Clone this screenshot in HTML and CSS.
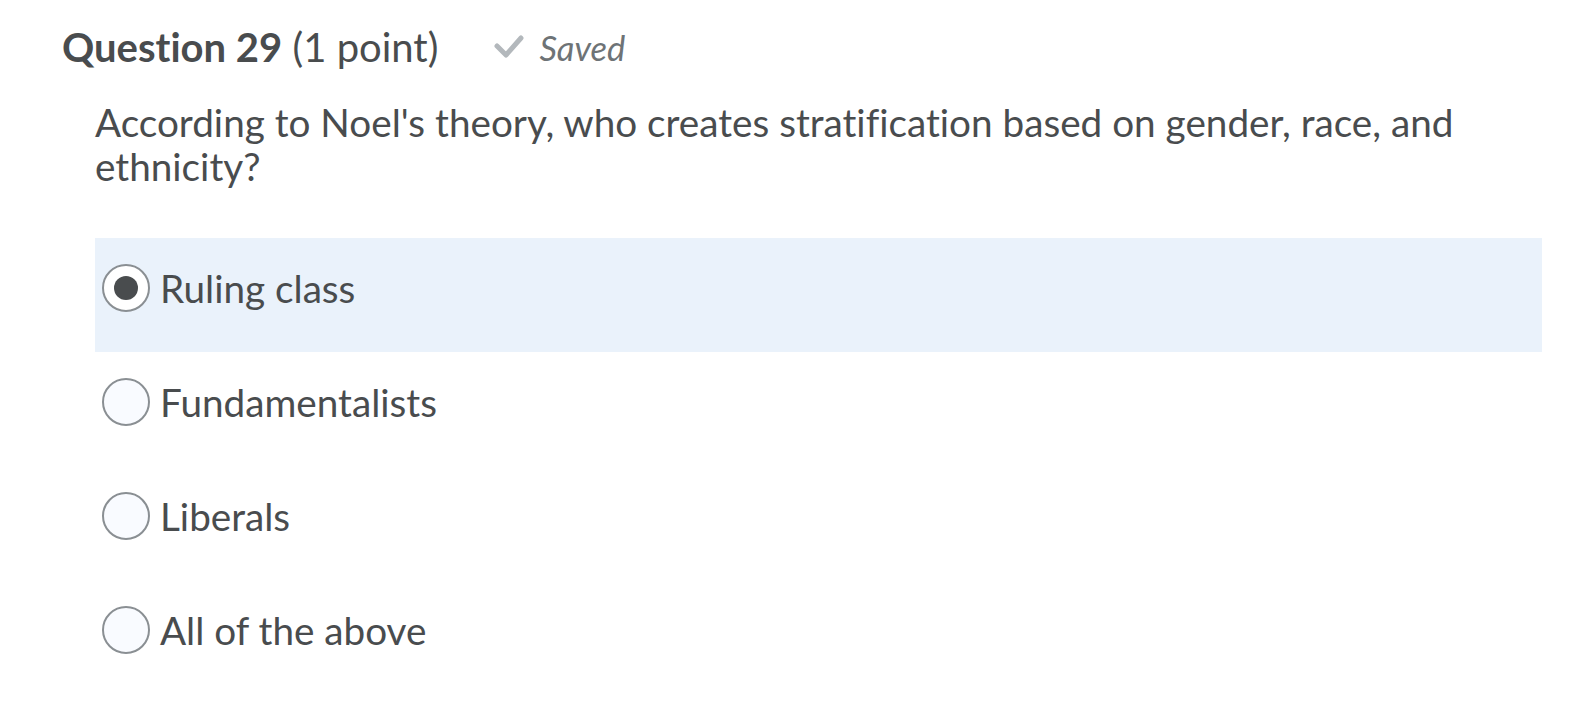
FILE: index.html
```html
<!DOCTYPE html>
<html>
<head>
<meta charset="utf-8">
<link rel="stylesheet" href="styles.css">
</head>
<body>
<div class="page">
  <div class="header">
    <h2 class="title"><strong>Question 29</strong> (1 point)</h2>
    <div class="saved">
      <svg class="check" width="32" height="26" viewBox="0 0 32 26"><path d="M5 13 L14 22 L29 5" fill="none" stroke="#b3b8bc" stroke-width="5" stroke-linecap="round" stroke-linejoin="round"/></svg>
      <span>Saved</span>
    </div>
  </div>
  <div class="body">
    <p class="question">According to Noel's theory, who creates stratification based on gender, race, and ethnicity?</p>
    <div class="options">
      <label class="option selected"><span class="radio"><span class="dot"></span></span><span class="label">Ruling class</span></label>
      <label class="option"><span class="radio"></span><span class="label">Fundamentalists</span></label>
      <label class="option"><span class="radio"></span><span class="label">Liberals</span></label>
      <label class="option"><span class="radio"></span><span class="label">All of the above</span></label>
    </div>
  </div>
</div>
</body>
</html>
```
FILE: styles.css
```css
html, body {
  margin: 0;
  padding: 0;
  background: #ffffff;
}
body {
  font-family: Lato, "Open Sans", sans-serif;
  color: #494c4e;
  font-variant-ligatures: none;
  font-feature-settings: "liga" 0, "clig" 0;
}
.page {
  padding: 23px 42px 0 62px;
}
.header {
  display: flex;
  align-items: center;
  gap: 54px;
  height: 48px;
}
.title {
  margin: 0;
  font-size: 40px;
  font-weight: 400;
  line-height: 48px;
}
.title strong {
  font-weight: 700;
}
.saved {
  display: flex;
  align-items: center;
  gap: 15px;
  font-style: italic;
  font-size: 34.5px;
  color: #6e7376;
}
.check {
  margin-top: -2px;
}
.body {
  padding-left: 33px;
  padding-right: 0;
  margin-right: -8px;
}
.question {
  margin: 29px 0 0 0;
  font-size: 38.7px;
  line-height: 44px;
}
.options {
  margin-top: 50px;
  display: flex;
  flex-direction: column;
}
.option {
  box-sizing: border-box;
  display: flex;
  align-items: flex-start;
  gap: 10px;
  height: 114px;
  padding: 26px 0 0 7px;
  font-size: 38.7px;
}
.option .label {
  line-height: 48px;
}
.option.selected {
  background: #eaf2fb;
}
.radio {
  box-sizing: border-box;
  flex: none;
  width: 48px;
  height: 48px;
  border: 2px solid #8a8f93;
  border-radius: 50%;
  background: #f9fbff;
  display: flex;
  align-items: center;
  justify-content: center;
}
.selected .radio {
  background: #ffffff;
}
.dot {
  width: 24px;
  height: 24px;
  border-radius: 50%;
  background: #494c4e;
}
```
